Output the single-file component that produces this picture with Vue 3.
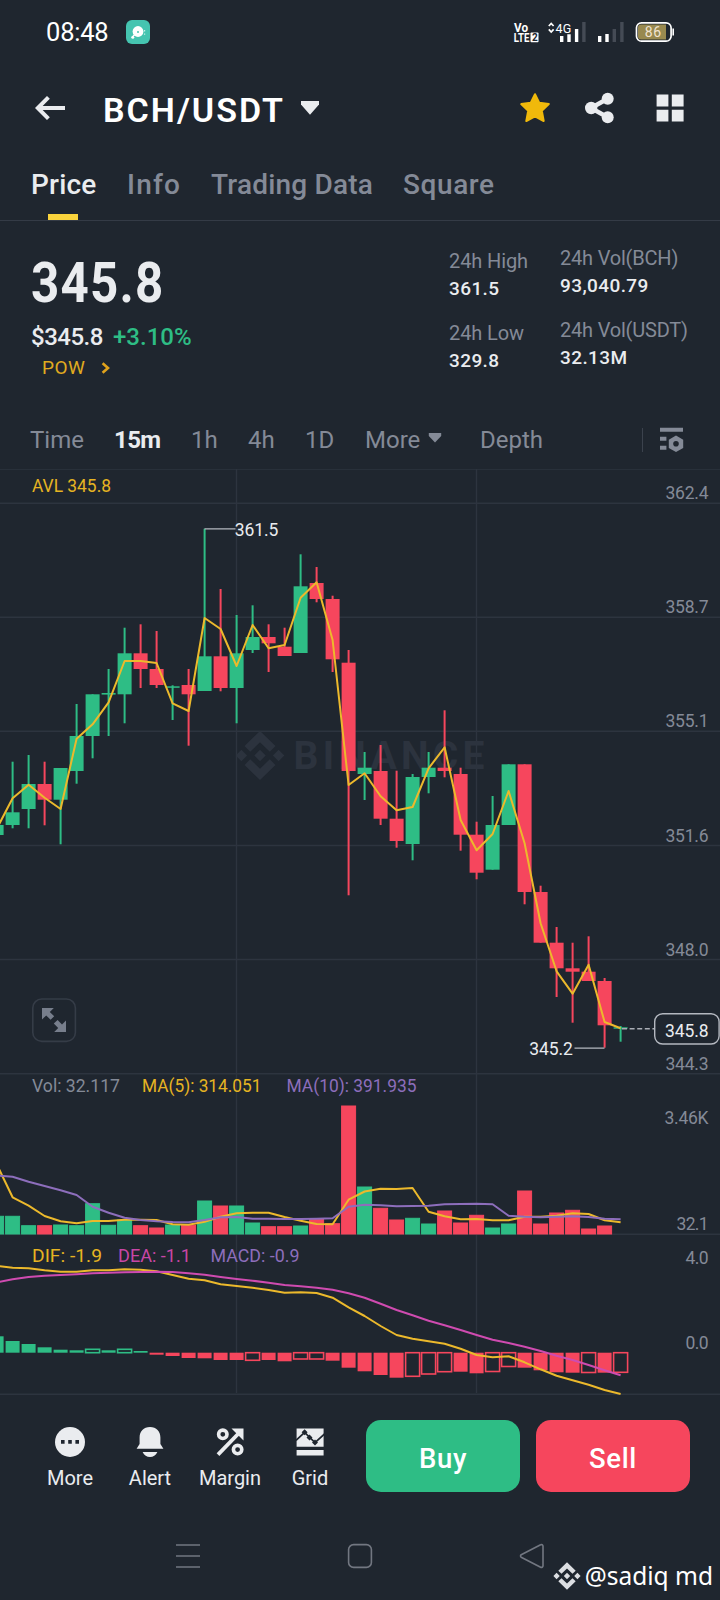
<script setup>
import { computed } from 'vue'

const STEP = 16
const FIRST_X = 12.6
const VOL_BASE = 1234
const MACD_BASE = 1352.7

const tabs = ['Price', 'Info', 'Trading Data', 'Square']
const intervals = ['Time', '15m', '1h', '4h', '1D']

// body top, body bottom, wick top, wick bottom, rising
const candles = [
  [825, 835, 825, 835, 1],
  [812.3, 825, 761.7, 828.3, 1],
  [784, 809, 755, 828.3, 1],
  [784, 799.7, 761.7, 825.3, 0],
  [768, 799.7, 768, 844.3, 1],
  [736, 771, 704, 783.7, 1],
  [694.3, 736, 694.3, 758.3, 1],
  [693, 694.6, 669, 736, 1],
  [653.3, 694.3, 627.7, 723.3, 1],
  [653.3, 669, 624.3, 688, 0],
  [669, 685, 631, 688, 0],
  [686.3, 687.8, 685.3, 720, 1],
  [685, 694.3, 669, 745.7, 0],
  [656.3, 691, 528.7, 691, 1],
  [656.3, 688, 589, 691.3, 0],
  [653.3, 688, 615, 723.3, 1],
  [637, 650, 605.3, 653, 1],
  [637, 643.3, 624.3, 672, 0],
  [646.7, 656, 627.7, 656, 0],
  [586.3, 653, 554.3, 653, 1],
  [583, 599, 567, 602.3, 0],
  [599, 659.3, 595.7, 672, 0],
  [662.7, 771, 650, 895.3, 0],
  [767.7, 774, 752, 800, 1],
  [771, 818.7, 745, 825, 0],
  [818.7, 841, 770.7, 847.7, 0],
  [777, 844, 774, 860.3, 1],
  [767.7, 777, 752, 793.3, 1],
  [767.7, 771, 710.3, 777.3, 0],
  [774, 834.7, 767.7, 850.7, 0],
  [834.7, 872.7, 821.7, 879.3, 0],
  [825, 869.7, 796, 869.7, 1],
  [764.3, 825, 764.3, 825, 1],
  [764.3, 892, 764.3, 904.3, 0],
  [892, 942.7, 885.7, 942.7, 0],
  [942.7, 968.3, 927, 997, 0],
  [968.3, 971.7, 942.7, 1022.7, 0],
  [971.7, 981, 936.3, 981, 0],
  [981, 1025.3, 978, 1047.7, 0],
  [1027.3, 1028.7, 1026, 1041.7, 1],
]

const volumes = [
  1216.3, 1216.3, 1225.7, 1225.7, 1225, 1225.7, 1203.7, 1225.3, 1220, 1225.7,
  1228, 1225, 1225.3, 1201, 1206, 1206, 1223, 1226.7, 1226.7, 1226,
  1218.7, 1223.7, 1106, 1187, 1208.3, 1220, 1218.3, 1224, 1211, 1223,
  1215.3, 1228, 1224, 1191, 1224, 1213, 1210.3, 1229, 1226, 1234,
]

// bar end, drawn as outline only
const macd = [
  [1336.3], [1341], [1344], [1347.3], [1349.7], [1350.3], [1349.3, 1], [1350.3], [1349.3, 1], [1351],
  [1354.7], [1356], [1358], [1358.3], [1360], [1360], [1360.3, 1], [1360], [1361.3], [1359, 1],
  [1359, 1], [1360.7], [1367.7], [1371.3], [1375], [1377.7], [1376.3, 1], [1374, 1], [1371.7, 1], [1371.7],
  [1373.3], [1371.5, 1], [1366.5, 1], [1367.7], [1370.3], [1372.3], [1372.7], [1372.5, 1], [1372.7], [1372.3, 1],
]

const avl = [
  829, 798.3, 784.7, 797.7, 809, 738.7, 724.3, 702.3, 661, 661,
  663, 703.3, 711, 618, 629, 666, 625, 648.3, 645, 597.7,
  582.3, 640, 785, 773.3, 796.3, 810.3, 807, 768.3, 747.3, 820,
  850.3, 834, 791, 843.3, 923.3, 971.3, 993.7, 964.7, 1022, 1028.3,
]
const ma5 = [
  1164, 1197.3, 1205.7, 1216, 1221.3, 1223.3, 1221, 1221, 1219.7, 1219.7,
  1220, 1224.3, 1224.7, 1221.7, 1216.7, 1213.3, 1212.7, 1212.7, 1217, 1220.7,
  1224, 1224.3, 1199.7, 1191.5, 1188.7, 1189, 1188, 1211.7, 1216.3, 1219.3,
  1219, 1220.3, 1220.3, 1216.7, 1216.7, 1215.7, 1213.3, 1214, 1220.3, 1222.3,
]
const ma10 = [
  1175.5, 1176.7, 1181.7, 1186, 1190.3, 1195, 1206.7, 1212.7, 1217.7, 1220,
  1221.3, 1222, 1222.3, 1220, 1217.3, 1217, 1218.7, 1218.7, 1219, 1219,
  1218.7, 1218.3, 1206.7, 1204.7, 1205.3, 1206.3, 1206, 1205.7, 1204.3, 1204,
  1203.7, 1204.3, 1215.7, 1216.7, 1217.3, 1216.7, 1216.3, 1217, 1218.7, 1219.3,
]
const dif = [
  1266, 1267.7, 1268.3, 1270.3, 1271.7, 1271.7, 1270.3, 1270.3, 1269.3, 1269.7,
  1271.3, 1275, 1278.7, 1280.3, 1284.3, 1286, 1287.7, 1290, 1292.7, 1292.3,
  1293, 1297.7, 1307.3, 1316, 1326, 1335, 1338.7, 1341.3, 1343.7, 1348.7,
  1355, 1357.3, 1356.3, 1362.3, 1369.3, 1375.7, 1380.3, 1384.7, 1390, 1394,
]
const dea = [
  1282.3, 1279.3, 1277, 1275.7, 1275, 1274.3, 1273.3, 1272.7, 1272.3, 1272,
  1271.7, 1272, 1273.3, 1274.7, 1277, 1279, 1280.7, 1282.7, 1285, 1286.3,
  1287.7, 1289.7, 1293.3, 1297.7, 1303.7, 1310, 1315.3, 1320.7, 1325.3, 1330,
  1335, 1339.7, 1343, 1346.7, 1351, 1355.7, 1360, 1365, 1370.3, 1375.3,
]

const x = (i) => FIRST_X + (i - 1) * STEP
const toPoints = (list) => list.map((y, i) => `${x(i)},${y}`).join(' ')

const macdBars = computed(() => macd.map(([end, hollow], i) => {
  const up = end < MACD_BASE
  return {
    x: x(i),
    y: up ? end : MACD_BASE,
    h: Math.abs(end - MACD_BASE),
    hollow,
    up,
  }
}))

const rows = [469, 503.3, 617.3, 731.3, 845.5, 959.5, 1073.7, 1234.3, 1394.2]
const axis = [
  { t: '362.4', y: 498.5, w: 43 },
  { t: '358.7', y: 612.5, w: 43 },
  { t: '355.1', y: 726.5, w: 43 },
  { t: '351.6', y: 841.5, w: 43 },
  { t: '348.0', y: 955.5, w: 43 },
  { t: '344.3', y: 1069.5, w: 43 },
  { t: '3.46K', y: 1123.7, w: 44 },
  { t: '32.1', y: 1229.5, w: 32 },
  { t: '4.0', y: 1263.5, w: 23 },
  { t: '0.0', y: 1348.5, w: 23 },
]

const legends = [
  { t: 'AVL 345.8', x: 32, y: 491.8, w: 79, c: 'gold' },
  { t: 'Vol: 32.117', x: 32, y: 1091.8, w: 88, c: 'gray' },
  { t: 'MA(5): 314.051', x: 142, y: 1091.8, w: 119.5, c: 'gold' },
  { t: 'MA(10): 391.935', x: 286.5, y: 1091.8, w: 130, c: 'violet' },
  { t: 'DIF: -1.9', x: 32, y: 1261.8, w: 70, c: 'gold' },
  { t: 'DEA: -1.1', x: 118, y: 1261.8, w: 73, c: 'pink' },
  { t: 'MACD: -0.9', x: 210.5, y: 1261.8, w: 89, c: 'violet' },
]
</script>

<template>
  <div class="screen">
    <div class="status">
      <span class="clock">08:48</span>
      <span class="app-dot">
        <svg width="24" height="24" viewBox="0 0 24 24">
          <circle cx="12" cy="11.5" r="5.4" fill="#fff" />
          <circle cx="6.8" cy="17.2" r="1.5" fill="#fff" />
          <path d="M7 16l3-2" stroke="#fff" stroke-width="1.4" />
          <circle cx="12" cy="12" r="1" fill="#45c4b0" />
          <path d="M18.6 10v1.6M18.6 13.4v1.4" stroke="#c9f0e8" stroke-width="1.2" />
        </svg>
      </span>
      <svg class="signals" width="168" height="30" viewBox="510 17 168 30">
        <g fill="#fff" font-weight="700">
          <text x="514" y="31.6" font-size="13.5" textLength="14" lengthAdjust="spacingAndGlyphs">Vo</text>
          <text x="513.8" y="42.2" font-size="13" textLength="15.5" lengthAdjust="spacingAndGlyphs">LTE</text>
          <rect x="530.5" y="32.5" width="8" height="9.7" rx="0.8" />
          <text x="532" y="41" font-size="10" fill="#1f262f">2</text>
        </g>
        <text x="555.6" y="32.6" font-size="13.5" fill="#fff" textLength="15.6" lengthAdjust="spacingAndGlyphs">4G</text>
        <path d="M548.8 26l2.4-2.6 2.4 2.6M548.8 29.4l2.4 2.6 2.4-2.6" fill="none" stroke="#fff" stroke-width="1.7" />
        <g stroke-width="3.4" stroke="#fff">
          <path d="M561.7 36v6M569 34.3V42M576.6 29v13M599.7 36v6M607 34v8" />
          <path d="M583.9 22v20M614.3 29v13M621.9 22v20" stroke="#454b55" />
        </g>
        <rect x="636.5" y="22.8" width="34.6" height="18.4" rx="5" fill="#1f262f" stroke="#fff" stroke-width="1.7" />
        <path d="M666 24.6h-25a3 3 0 0 0-3 3v9a3 3 0 0 0 3 3h25z" fill="#98894f" />
        <path d="M673.2 28.6v7" stroke="#fff" stroke-width="1.6" />
        <text x="644.8" y="37" font-size="14" fill="#f2e4d0" textLength="16.4">86</text>
      </svg>
    </div>

    <header class="header">
      <svg class="back" width="30" height="24" viewBox="0 0 30 24">
        <path d="M30 12H3M13.4 1.4L2.8 12l10.6 10.6" fill="none" stroke="#eaecef" stroke-width="4" />
      </svg>
      <h1>BCH/USDT</h1>
      <svg class="caret" width="18" height="14" viewBox="0 0 18 14">
        <path d="M0 0h18v3.4L9 13.8 0 3.4z" fill="#eaecef" />
      </svg>
      <svg class="star" width="32" height="32" viewBox="0 0 32 32">
        <path d="M16 2.2l4.2 8.6 9.6 1.3-7 6.6 1.9 10.3L16 24.4 7.3 29l1.9-10.3-7-6.6 9.6-1.3z" fill="#f0b90b" stroke="#f0b90b" stroke-width="2" stroke-linejoin="round" />
      </svg>
      <svg class="share" width="30" height="32" viewBox="0 0 30 32">
        <path d="M23 6.5L6 16l17 9.5" fill="none" stroke="#eaecef" stroke-width="4.4" />
        <circle cx="22.7" cy="6.8" r="6" fill="#eaecef" />
        <circle cx="6.2" cy="16" r="6.2" fill="#eaecef" />
        <circle cx="22.7" cy="25.2" r="6" fill="#eaecef" />
      </svg>
      <svg class="tiles" width="28" height="28" viewBox="0 0 28 28">
        <path d="M.6.6h11.8v11.8H.6zM15.8.6h11.8v11.8H15.8zM.6 15.8h11.8v11.8H.6zM15.8 15.8h11.8v11.8H15.8z" fill="#eaecef" />
      </svg>
    </header>

    <nav class="tabs">
      <div v-for="(tab, i) in tabs" :key="tab" class="tab" :class="{ active: i === 0 }">{{ tab }}</div>
    </nav>

    <section class="ticker">
      <div class="last">
        <div class="price">345.8</div>
        <div class="sub"><span class="usd">$345.8</span><span class="change">+3.10%</span></div>
        <div class="tag">
          POW
          <svg width="10" height="12" viewBox="0 0 10 12">
            <path d="M1.6 1.2L7 6l-5.4 4.8" fill="none" stroke="#e0a21c" stroke-width="2.6" />
          </svg>
        </div>
      </div>
      <dl class="stats">
        <dt>24h High</dt>
        <dd>361.5</dd>
        <dt>24h Low</dt>
        <dd>329.8</dd>
      </dl>
      <dl class="stats vol">
        <dt>24h Vol(BCH)</dt>
        <dd>93,040.79</dd>
        <dt>24h Vol(USDT)</dt>
        <dd>32.13M</dd>
      </dl>
    </section>

    <nav class="intervals">
      <span v-for="item in intervals" :key="item" :class="{ active: item === '15m' }">{{ item }}</span>
      <span class="more">More
        <svg width="14" height="10" viewBox="0 0 14 10"><path d="M.8 0h12.4v3L7 9.6.8 3z" fill="#848a97" /></svg>
      </span>
      <span>Depth</span>
      <i class="divider"></i>
      <svg class="settings" width="26" height="26" viewBox="0 0 26 26">
        <path d="M1 2.8h23M1 11.8h6.4M1 20.8h6.4" stroke="#848a97" stroke-width="4" />
        <path d="M17 8.6l7.2 4.1v8.2L17 25l-7.2-4.1v-8.2z" fill="#848a97" />
        <circle cx="17" cy="16.8" r="2.8" fill="#1f262f" />
      </svg>
    </nav>

    <svg class="chart" width="720" height="926" viewBox="0 469 720 926">
      <g stroke="#2d343f" stroke-width="1.4">
        <line v-for="y in rows" :key="y" x1="0" x2="720" :y1="y" :y2="y" />
        <line x1="236.5" x2="236.5" y1="469" y2="1393" />
        <line x1="476.5" x2="476.5" y1="469" y2="1393" />
      </g>

      <g fill="#2c333e">
        <g transform="translate(260 755.5)">
          <path d="M0-24.5L15.5-9.5 9.8-3.8 0-13.2-9.8-3.8-15.5-9.5zM0 24.5L15.5 9.5 9.8 3.8 0 13.2-9.8 3.8-15.5 9.5zM0-5.7L5.7 0 0 5.7-5.7 0zM18.6-5.7L24.3 0l-5.7 5.7L12.9 0zM-18.6-5.7L-12.9 0l-5.7 5.7L-24.3 0z" />
        </g>
        <text x="293.5" y="769.3" font-size="39" font-weight="700" textLength="191">BINANCE</text>
      </g>

      <g v-for="(c, i) in candles" :key="'c' + i" :class="c[4] ? 'up' : 'down'">
        <line :x1="x(i)" :x2="x(i)" :y1="c[2]" :y2="c[3]" stroke-width="2" />
        <rect :x="x(i) - 7" :y="c[0]" width="14" :height="c[1] - c[0]" stroke="none" />
      </g>
      <polyline class="line yellow" :points="toPoints(avl)" />

      <path d="M204.5 528.9h31M574.5 1048.1h30" stroke="#b4b8c0" stroke-width="1.4" />
      <text class="mark" x="234.8" y="535.8" textLength="43.5">361.5</text>
      <text class="mark" x="529.3" y="1054.8" textLength="43.5">345.2</text>
      <path d="M622 1028.8h33" stroke="#a9adb5" stroke-width="1.4" stroke-dasharray="5 2.6" />
      <rect x="654.7" y="1013.7" width="64.4" height="30.3" rx="8" fill="#1f262f" stroke="#b4b8c0" stroke-width="1.4" />
      <text class="mark" x="665" y="1037.3" textLength="43.5">345.8</text>

      <g class="expand">
        <rect x="32.8" y="999" width="42.6" height="42.4" rx="9" />
        <path d="M42 1008h11.8l-4 4 4.4 4.2-3.6 3.6-4.4-4.4-4.2 4.2zM66 1032V1020.4l-4 4-4.4-4.4-3.8 3.6 4.4 4.4-4 4z" />
      </g>

      <rect
        v-for="(v, i) in volumes" :key="'v' + i" :class="candles[i][4] ? 'up' : 'down'"
        :x="x(i) - 7" :y="v" width="14" :height="VOL_BASE - v" stroke="none" />
      <polyline class="line yellow" :points="toPoints(ma5)" />
      <polyline class="line purple" :points="toPoints(ma10)" />

      <g v-for="(b, i) in macdBars" :key="'m' + i" :class="b.up ? 'up' : 'down'">
        <rect v-if="b.hollow" class="hollow" :x="b.x - 7" :y="b.y" width="14" :height="b.h" />
        <rect v-else :x="b.x - 7" :y="b.y" width="14" :height="b.h" stroke="none" />
      </g>
      <polyline class="line yellow" :points="toPoints(dif)" />
      <polyline class="line magenta" :points="toPoints(dea)" />

      <text
        v-for="l in legends" :key="l.t" class="legend" :class="l.c" :x="l.x" :y="l.y"
        :textLength="l.w" lengthAdjust="spacingAndGlyphs">{{ l.t }}</text>
      <text
        v-for="a in axis" :key="a.t" class="axis" :x="708.5 - a.w" :y="a.y" :textLength="a.w">{{ a.t }}</text>
    </svg>

    <div class="actions">
      <div class="action">
        <svg width="30" height="32" viewBox="0 0 30 32">
          <circle cx="15" cy="16" r="15" fill="#eaecef" />
          <path d="M6 14h3.6v3.8H6zM13.2 14h3.6v3.8h-3.6zM20.4 14H24v3.8h-3.6z" fill="#1f262f" />
        </svg>
        <span>More</span>
      </div>
      <div class="action">
        <svg width="30" height="32" viewBox="0 0 30 32">
          <path d="M15 1C8.6 1 4.6 5.6 4.6 11.5V18L1.6 22.8h26.8L25.4 18v-6.5C25.4 5.6 21.4 1 15 1zM7.6 26h14.8c-1.6 3.2-4.2 5-7.4 5s-5.8-1.8-7.4-5z" fill="#eaecef" />
        </svg>
        <span>Alert</span>
      </div>
      <div class="action">
        <svg width="30" height="32" viewBox="0 0 30 32">
          <path d="M3 28.6L24 7" stroke="#eaecef" stroke-width="3.8" />
          <path d="M16.5 2.5H28.5V14.5z" fill="#eaecef" />
          <circle cx="7.8" cy="8.3" r="4.2" fill="none" stroke="#eaecef" stroke-width="3.6" />
          <circle cx="22.6" cy="23.6" r="4.2" fill="none" stroke="#eaecef" stroke-width="3.6" />
        </svg>
        <span>Margin</span>
      </div>
      <div class="action">
        <svg width="30" height="32" viewBox="0 0 30 32">
          <path d="M1.6 2.5h27v18.3h-27zM1.6 24h27v5.5h-27z" fill="#eaecef" />
          <path d="M1 14.4l8.6-8L20 16.6l9.6-8.6" fill="none" stroke="#1f262f" stroke-width="1.8" />
          <path d="M9.6 3.3l3 3-3 3-3-3zM14.5 8.5l3 3-3 3-3-3zM20 13.6l3 3-3 3-3-3z" fill="#1f262f" />
        </svg>
        <span>Grid</span>
      </div>
      <button class="buy">Buy</button>
      <button class="sell">Sell</button>
    </div>

    <div class="system-nav">
      <svg width="26" height="26" viewBox="0 0 26 26"><path d="M1 2h24M1 13h24M1 24h24" /></svg>
      <svg width="26" height="26" viewBox="0 0 26 26"><rect x="1.6" y="1.6" width="22.8" height="22.8" rx="5" /></svg>
      <svg width="26" height="26" viewBox="0 0 26 26"><path d="M2.2 11.8L21.6 1.8a1.6 1.6 0 0 1 2.4 1.4v19.6a1.6 1.6 0 0 1-2.4 1.4L2.2 14.2a1.4 1.4 0 0 1 0-2.4z" /></svg>
    </div>

    <div class="credit">
      <svg width="28" height="28" viewBox="-25 -25 50 50">
        <path d="M0-24.5L15.5-9.5 9.8-3.8 0-13.2-9.8-3.8-15.5-9.5zM0 24.5L15.5 9.5 9.8 3.8 0 13.2-9.8 3.8-15.5 9.5zM0-5.7L5.7 0 0 5.7-5.7 0zM18.6-5.7L24.3 0l-5.7 5.7L12.9 0zM-18.6-5.7L-12.9 0l-5.7 5.7L-24.3 0z" fill="#dcdee2" />
      </svg>
      <span>@sadiq md</span>
    </div>
  </div>
</template>

<style>
body {
  background: #1f262f;
}
</style>

<style scoped>
.screen {
  position: relative;
  width: 720px;
  height: 1600px;
  overflow: hidden;
  background: #1f262f;
  color: #eaecef;
  font-family: Roboto, "Liberation Sans", sans-serif;
}

svg {
  display: block;
  flex: none;
}

.status {
  display: flex;
  align-items: center;
  height: 64px;
  padding: 0 42px 0 46px;
}

.clock {
  width: 80px;
  font-size: 25.5px;
  letter-spacing: -0.2px;
  color: #fff;
}

.app-dot {
  width: 24px;
  height: 24px;
  border-radius: 6px;
  background: #45c4b0;
}

.signals {
  margin-left: auto;
}

.header {
  display: flex;
  align-items: center;
  height: 88px;
  padding: 0 36px 0 35px;
}

.header h1 {
  width: 198px;
  margin: 3px 0 0 38px;
  font-size: 34px;
  font-weight: 600;
  letter-spacing: 2px;
  color: #fff;
}

.star {
  margin-left: auto;
}

.share {
  margin-left: 34px;
}

.tiles {
  margin-left: 41px;
}

.tabs {
  display: grid;
  grid-template-columns: 96px 84px 192px 1fr;
  height: 68px;
  padding-left: 31px;
  border-bottom: 1px solid #343b46;
  font-size: 28px;
  font-weight: 500;
  line-height: 65px;
  letter-spacing: 0.2px;
  color: #848a97;
}

.tab:nth-child(2) {
  letter-spacing: 1.2px;
}

.tab:last-child {
  letter-spacing: 0.6px;
}

.tab.active {
  position: relative;
  color: #eaecef;
}

.tab.active::after {
  content: '';
  position: absolute;
  left: 17px;
  bottom: 0;
  width: 30px;
  height: 6px;
  background: #f9d33c;
}

.ticker {
  display: flex;
  height: 190px;
  padding-left: 31px;
}

.last {
  width: 418px;
  padding-top: 32px;
}

.price {
  font-size: 56px;
  font-weight: 700;
  line-height: 60px;
  letter-spacing: 1.4px;
  transform: scaleX(0.88);
  transform-origin: left;
}

.sub {
  margin-top: 6px;
  font-size: 24px;
  font-weight: 500;
  line-height: 36px;
}

.usd {
  display: inline-block;
  width: 82px;
  letter-spacing: -0.5px;
}

.change {
  color: #2ebd85;
}

.tag {
  display: flex;
  align-items: center;
  gap: 16px;
  padding-left: 11px;
  font-size: 19px;
  line-height: 26px;
  letter-spacing: 0.5px;
  color: #e0ab1f;
}

.stats {
  width: 111px;
  margin: 0;
  padding-top: 27px;
  white-space: nowrap;
}

.stats.vol {
  padding-top: 24px;
}

.stats dt {
  font-size: 20px;
  line-height: 26px;
  letter-spacing: -0.1px;
  color: #848a97;
}

.stats.vol dt {
  letter-spacing: -0.2px;
}

.stats dd {
  margin: 0 0 16px;
  font-size: 19px;
  font-weight: 500;
  line-height: 30px;
  letter-spacing: 0.4px;
}

.intervals {
  display: grid;
  grid-template-columns: 84px 77px 57px 57px 60px 115px 162px 17px auto;
  align-items: center;
  height: 58px;
  padding-left: 30px;
  font-size: 24px;
  color: #848a97;
}

.intervals .active {
  font-weight: 700;
  letter-spacing: -0.6px;
  color: #eaecef;
}

.more {
  display: flex;
  align-items: center;
  gap: 8px;
}

.more svg {
  margin-top: -5px;
}

.divider {
  width: 1px;
  height: 24px;
  background: #3b424d;
}

.up {
  fill: #2ebd85;
  stroke: #2ebd85;
}

.down {
  fill: #f6465d;
  stroke: #f6465d;
}

.hollow {
  fill: #1f262f;
  stroke-width: 1.6px;
}

.line {
  fill: none;
  stroke-width: 2px;
  stroke-linejoin: round;
}

.yellow {
  stroke: #ecb92c;
}

.purple {
  stroke: #8d6ebc;
}

.magenta {
  stroke: #cf4bb0;
}

.mark {
  font-size: 17.5px;
  fill: #eaecef;
}

.legend {
  font-size: 18.4px;
}

.axis {
  font-size: 17.5px;
}

.axis,
.gray {
  fill: #848a97;
}

.gold {
  fill: #e6b422;
}

.violet {
  fill: #8d6ebc;
}

.pink {
  fill: #c846a6;
}

.expand rect {
  fill: none;
  stroke: #353c47;
  stroke-width: 1.6px;
}

.expand path {
  fill: #777e8c;
}

.actions {
  display: flex;
  height: 125px;
  padding: 25px 30px 0;
  box-sizing: border-box;
}

.action {
  display: flex;
  flex-direction: column;
  align-items: center;
  width: 80px;
  padding-top: 6px;
  font-size: 20px;
}

.action span {
  margin-top: 7px;
  line-height: 26px;
}

.actions button {
  width: 154px;
  height: 72px;
  margin-left: 16px;
  padding: 4px 0 0;
  border: 0;
  border-radius: 15px;
  font: 500 27.5px Roboto, sans-serif;
  letter-spacing: 0.6px;
  color: #fff;
}

.buy {
  background: #2ebd85;
}

.sell {
  background: #f6465d;
}

.system-nav {
  display: grid;
  grid-template-columns: repeat(3, 172px);
  place-content: center;
  justify-items: center;
  height: 72px;
}

.system-nav svg {
  fill: none;
  stroke: #727781;
  stroke-width: 1.6px;
}

.credit {
  position: absolute;
  right: 7px;
  bottom: 8px;
  display: flex;
  align-items: center;
  gap: 4px;
  font: 24.5px/32px "Noto Sans", sans-serif;
  color: #fff;
}
</style>
